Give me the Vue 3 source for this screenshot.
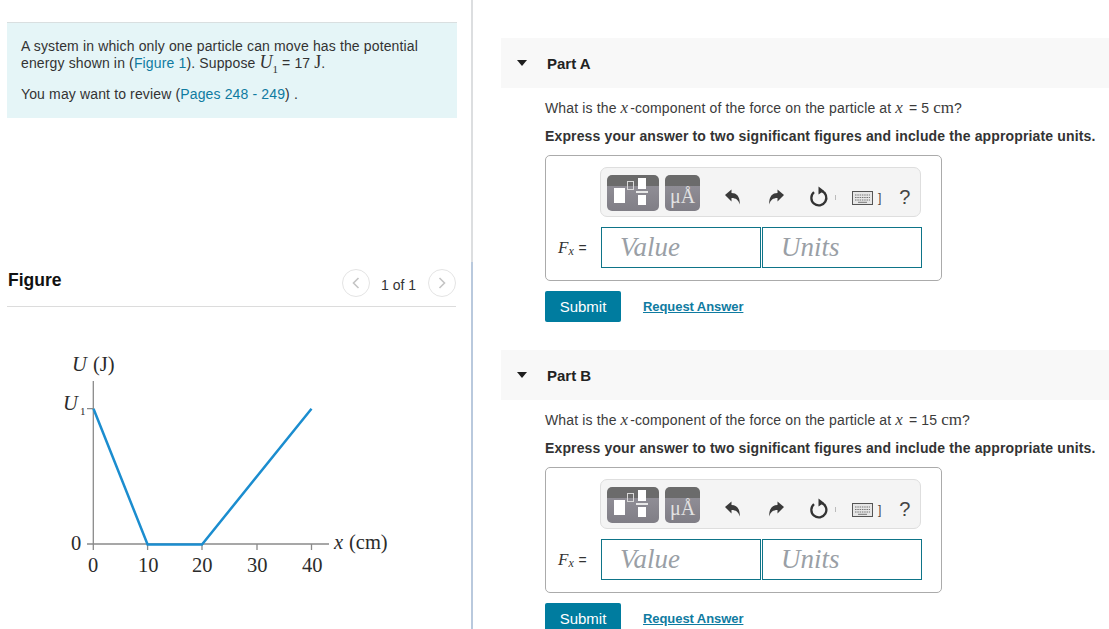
<script setup>
const parts = [
  { name: 'Part A', at: '5' },
  { name: 'Part B', at: '15' },
]
</script>

<template>
  <div class="page">
    <aside class="left">
      <section class="intro">
        <p class="l1">A system in which only one particle can move has the potential energy shown in (<a>Figure 1</a>). Suppose <span class="m big"><i>U</i><sub>1</sub></span> = 17 <span class="m big">J</span>.</p>
        <p class="l2">You may want to review (<a>Pages 248 - 249</a>) .</p>
      </section>
      <header class="fig-head">
        <h2>Figure</h2>
        <div class="pager">
          <span class="circle"><svg width="10" height="14" viewBox="0 0 10 14"><path d="M7.5 2 2.5 7l5 5" fill="none" stroke="#c4c4c4" stroke-width="1.6"/></svg></span>
          <span class="count">1 of 1</span>
          <span class="circle"><svg width="10" height="14" viewBox="0 0 10 14"><path d="M2.5 2l5 5-5 5" fill="none" stroke="#c4c4c4" stroke-width="1.6"/></svg></span>
        </div>
      </header>
      <svg class="graph" width="340" height="240" viewBox="50 350 340 240">
        <g stroke="#8a8a8a" stroke-width="1.3" fill="none">
          <path d="M93.3 380V549M87 543H329M87 407.7h6M147.6 543v6M202 543v6M257 543v6M311.5 543v6"/>
        </g>
        <path d="M93.500 407.700 147.600 543.500H202L311.500 407.700" fill="none" stroke="#1b8dcf" stroke-width="2.500"/>
        <g class="gt">
          <text x="72" y="370" font-style="italic">U</text>
          <text x="93" y="370">(J)</text>
          <text x="63" y="409" font-style="italic">U</text>
          <text class="sm" x="80" y="414">1</text>
          <text x="71" y="549">0</text>
          <text x="88" y="571">0</text>
          <text x="138" y="571">10</text>
          <text x="192" y="571">20</text>
          <text x="247" y="571">30</text>
          <text x="302" y="571">40</text>
          <text x="334" y="548" font-style="italic">x</text>
          <text x="349" y="548">(cm)</text>
        </g>
      </svg>
    </aside>

    <main class="right">
      <section v-for="p in parts" :key="p.name" class="part">
        <div class="part-head">
          <span class="caret"></span>
          <span class="part-name">{{ p.name }}</span>
        </div>
        <div class="part-body">
          <p class="q">What is the <i class="m var">x</i>-component of the force on the particle at <i class="m var">x</i> = {{ p.at }} <span class="m">cm</span>?</p>
          <p class="ex">Express your answer to two significant figures and include the appropriate units.</p>
          <div class="answer">
            <div class="tools">
              <span class="tbtn frac">
                <svg width="52" height="36" viewBox="0 0 52 36">
                  <rect x="7" y="13" width="11" height="15" fill="#fff"/>
                  <rect x="20.500" y="6.500" width="6" height="8" fill="none" stroke="#d8d8d8" stroke-width="1"/>
                  <rect x="31" y="3" width="8" height="11" fill="#fff"/>
                  <rect x="29" y="16" width="12" height="2" fill="#e8e8e8"/>
                  <rect x="31" y="20" width="8" height="10" fill="#fff"/>
                </svg>
              </span>
              <span class="tbtn unit"><span class="mu">μÅ</span></span>
              <svg class="ic undo" width="18" height="18" viewBox="0 0 18 18"><path d="M1 7 7.500 1.500V5C12.500 5 16 8 15.800 16.500 14.400 12 12 10 7.500 10v3.500Z" fill="#3a3a3a"/></svg>
              <svg class="ic redo" width="18" height="18" viewBox="0 0 18 18"><path d="M17 7 10.500 1.500V5C5.500 5 2 8 2.200 16.500 3.600 12 6 10 10.500 10v3.500Z" fill="#3a3a3a"/></svg>
              <svg class="ic reset" width="20" height="22" viewBox="0 0 20 22"><path d="M12.500 4.900A7.500 7.500 0 1 1 5 6.200" fill="none" stroke="#333" stroke-width="2.300"/><path d="M9.500 0.500 15 4.800 9.500 8.500Z" fill="#333"/></svg>
              <span class="tick"></span>
              <svg class="ic kb" width="21" height="14" viewBox="0 0 21 14"><rect x=".5" y=".5" width="20" height="13" fill="#e6e6e6" stroke="#555"/><path d="M3 4h15M3 6.500h15M3 9h15" stroke="#777" stroke-width="1.200" stroke-dasharray="1.500 .8"/><path d="M6 11.300h9" stroke="#777"/></svg>
              <span class="brk">]</span>
              <span class="help">?</span>
            </div>
            <div class="row">
              <span class="lbl"><i class="m">F<sub>x</sub></i> =</span>
              <span class="inp"><span class="ph">Value</span></span>
              <span class="inp"><span class="ph">Units</span></span>
            </div>
          </div>
          <div class="actions">
            <button class="submit">Submit</button>
            <a class="req">Request Answer</a>
          </div>
        </div>
      </section>
    </main>
  </div>
</template>

<style scoped>
.page { display: flex; height: 629px; overflow: hidden; font-family: "Liberation Sans", Arial, sans-serif; color: #333; background: #fff; }
.left { flex: none; width: 473px; box-sizing: border-box; border-right: 2px solid; border-image: linear-gradient(#dcdee0 262px, #b9c9dd 262px) 1; padding: 22px 14px 0 7px; }
p { margin: 0; }
a { color: #0f7ba1; }
.intro { height: 96px; box-sizing: border-box; background: #e5f5f7; border-top: 1px solid #d9dfe0; padding: 15px 14px 0; font-size: 14px; line-height: 17px; letter-spacing: .14px; }
.l2 { margin-top: 14px; }
.m { font-family: "Liberation Serif", serif; font-size: 16px; line-height: 0; letter-spacing: 0; }
.big { font-size: 18px; }
.m sub { font-size: 11px; line-height: 0; }
.fig-head { margin: 148px 1px 0 0; height: 40px; border-bottom: 1px solid #dcdcdc; display: flex; justify-content: space-between; }
h2 { margin: 4px 0 0 1px; font-size: 17.500px; line-height: 20px; font-weight: 700; color: #111; }
.pager { display: flex; align-items: center; height: 28px; margin-top: 3px; font-size: 14px; }
.count { margin: 4px 12px 0 11px; }
.circle { width: 28px; height: 28px; border: 1px solid #e4e4e4; border-radius: 50%; box-sizing: border-box; display: flex; align-items: center; justify-content: center; }
.graph { display: block; margin: 44px 0 0 43px; }
.gt text { font-family: "Liberation Serif", serif; font-size: 20.500px; fill: #2b2b2b; }
.gt .sm { font-size: 11px; }
.right { flex: 1; padding: 38px 0 0 28px; min-width: 0; }
.part { height: 312px; }
.part-head { height: 50px; background: #f8f8f8; display: flex; align-items: center; padding-left: 16px; }
.caret { width: 0; height: 0; border-left: 5.500px solid transparent; border-right: 5.500px solid transparent; border-top: 6px solid #1e1e1e; }
.part-name { margin-left: 20px; font-size: 15px; font-weight: 700; color: #222; }
.part-body { padding: 11px 0 0 44px; }
.q { font-size: 14px; line-height: 18px; color: #3b3b3b; letter-spacing: .14px; }
.q .m { font-size: 17px; }
.q .var { padding-right: 2px; }
.ex { margin-top: 10px; font-size: 14px; line-height: 18px; font-weight: 700; letter-spacing: .14px; color: #333; white-space: nowrap; }
.answer { margin-top: 10px; width: 397px; height: 126px; box-sizing: border-box; border: 1px solid #ababab; border-radius: 5px; padding: 11px 0 0 54px; }
.tools { width: 321px; height: 50px; box-sizing: border-box; background: #f4f4f4; border: 1px solid #dedede; border-radius: 7px; display: flex; align-items: center; padding-left: 6px; }
.tbtn { display: block; height: 36px; margin-top: 1px; border-radius: 5px; background: linear-gradient(#6b6b6b 0, #6b6b6b 30%, #8f8d95 31%, #807e86 100%); }
.frac { width: 52px; margin-right: 6px; }
.frac svg { display: block; }
.unit { width: 35px; }
.mu { display: block; text-align: center; color: #e2e2e2; font-family: "Liberation Serif", serif; font-size: 20px; line-height: 42px; height: 36px; overflow: hidden; }
.ic { display: block; flex: none; margin-top: 10px; }
.undo { margin-left: 24px; }
.redo { margin-left: 25px; }
.reset { margin-left: 24px; margin-top: 9px; }
.tick { width: 1px; height: 5px; background: #bbb; margin: 10px 0 0 6px; }
.kb { margin-left: 16px; margin-top: 12px; }
.brk { font-size: 12px; margin: 12px 0 0 5px; color: #444; }
.help { margin: 10px 0 0 18px; font-size: 20px; color: #444; }
.row { display: flex; align-items: center; margin-top: 10px; }
.lbl { width: 43px; margin-left: -42px; font-size: 14px; white-space: nowrap; word-spacing: 1px; }
.lbl .m { font-size: 17px; }
.lbl sub { font-size: 12px; vertical-align: -2px; }
.inp { width: 160px; height: 41px; box-sizing: border-box; border: 1px solid #0e7488; margin-right: 1px; padding-left: 18px; display: flex; align-items: center; }
.ph { font-family: "Liberation Serif", serif; font-style: italic; font-size: 27px; color: #9a9fa6; }
.actions { display: flex; align-items: center; margin-top: 10px; }
.submit { width: 76px; height: 31px; background: #007c9f; border: 0; border-radius: 2px; color: #fff; font: 15px "Liberation Sans", Arial, sans-serif; padding: 0; }
.req { margin-left: 22px; font-size: 13px; font-weight: 700; letter-spacing: -.07px; text-decoration: underline; color: #0f7ba1; }
</style>

<style>
html, body { margin: 0; overflow: hidden; }
</style>
